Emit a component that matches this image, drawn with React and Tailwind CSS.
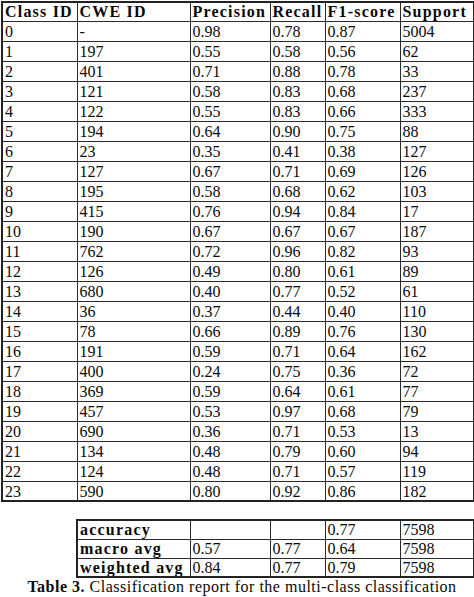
const rows = [
  ["0", "-", "0.98", "0.78", "0.87", "5004"],
  ["1", "197", "0.55", "0.58", "0.56", "62"],
  ["2", "401", "0.71", "0.88", "0.78", "33"],
  ["3", "121", "0.58", "0.83", "0.68", "237"],
  ["4", "122", "0.55", "0.83", "0.66", "333"],
  ["5", "194", "0.64", "0.90", "0.75", "88"],
  ["6", "23", "0.35", "0.41", "0.38", "127"],
  ["7", "127", "0.67", "0.71", "0.69", "126"],
  ["8", "195", "0.58", "0.68", "0.62", "103"],
  ["9", "415", "0.76", "0.94", "0.84", "17"],
  ["10", "190", "0.67", "0.67", "0.67", "187"],
  ["11", "762", "0.72", "0.96", "0.82", "93"],
  ["12", "126", "0.49", "0.80", "0.61", "89"],
  ["13", "680", "0.40", "0.77", "0.52", "61"],
  ["14", "36", "0.37", "0.44", "0.40", "110"],
  ["15", "78", "0.66", "0.89", "0.76", "130"],
  ["16", "191", "0.59", "0.71", "0.64", "162"],
  ["17", "400", "0.24", "0.75", "0.36", "72"],
  ["18", "369", "0.59", "0.64", "0.61", "77"],
  ["19", "457", "0.53", "0.97", "0.68", "79"],
  ["20", "690", "0.36", "0.71", "0.53", "13"],
  ["21", "134", "0.48", "0.79", "0.60", "94"],
  ["22", "124", "0.48", "0.71", "0.57", "119"],
  ["23", "590", "0.80", "0.92", "0.86", "182"],
];

const summary = [
  ["accuracy", "", "", "0.77", "7598"],
  ["macro avg", "0.57", "0.77", "0.64", "7598"],
  ["weighted avg", "0.84", "0.77", "0.79", "7598"],
];

const headers = ["Class ID", "CWE ID", "Precision", "Recall", "F1-score", "Support"];
const widths = ["w-[75px]", "w-[113px]", "w-[80px]", "w-[55px]", "w-[75px]", "w-[74px]"];

const cell = "border-[1.5px] border-[#2a2a2a] px-[2px] leading-[17px] align-middle whitespace-nowrap overflow-hidden";
const bold = "font-bold tracking-[1.2px]";

export default function App() {
  return (
    <div className="font-serif">
      <div className="w-[474px] h-[597px] bg-white text-[#0a0a0a] overflow-hidden font-[Liberation_Serif,serif] text-[16px]">
        <div className="pl-[1px] pt-[1px]">
          <table className="table-fixed border-collapse border-2 border-[#222] w-[472px]">
            <colgroup>
              {widths.map((w, i) => <col key={i} className={w} />)}
            </colgroup>
            <thead>
              <tr>
                {headers.map((h) => (
                  <th key={h} className={`${cell} h-[19px] ${bold} text-left`}>{h}</th>
                ))}
              </tr>
            </thead>
            <tbody>
              {rows.map((r) => (
                <tr key={r[0]}>
                  {r.map((v, i) => <td key={i} className={`${cell} h-[20px] pt-[1px]`}>{v}</td>)}
                </tr>
              ))}
            </tbody>
          </table>
        </div>

        <div className="pl-[76px] pt-[17px]">
          <table className="table-fixed border-collapse border-2 border-[#222] w-[397px]">
            <colgroup>
              {widths.slice(1).map((w, i) => <col key={i} className={w} />)}
            </colgroup>
            <tbody>
              {summary.map((r) => (
                <tr key={r[0]}>
                  {r.map((v, i) => (
                    <td key={i} className={`${cell} h-[19px] ${i === 0 ? bold : ""}`}>{v}</td>
                  ))}
                </tr>
              ))}
            </tbody>
          </table>
        </div>

        <p className="text-center pl-[10px] leading-[17px] tracking-[0.5px]">
          <span className="font-bold">Table 3.</span> Classification report for the multi-class classification
        </p>
      </div>
    </div>
  );
}
